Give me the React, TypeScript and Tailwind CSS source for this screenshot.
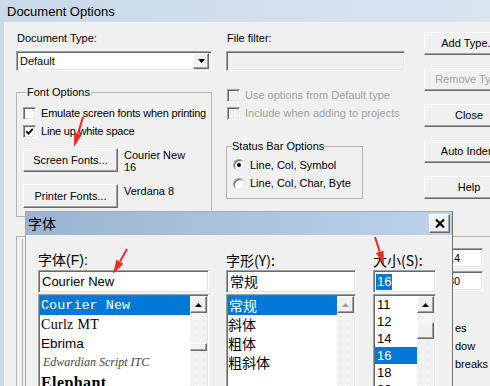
import React from "react";

const raised =
  "bg-[#f0f0f0] border border-t-white border-l-white border-r-[#696969] border-b-[#696969] shadow-[inset_-1px_-1px_0_#a0a0a0]";
const sunken =
  "border border-t-[#a0a0a0] border-l-[#a0a0a0] border-r-white border-b-white shadow-[inset_1px_1px_0_#696969,inset_-1px_-1px_0_#e3e3e3]";
const dither =
  "bg-[repeating-conic-gradient(#e9e9e9_0_25%,#ffffff_0_50%)] bg-[length:2px_2px]";

function Button({ label, disabled, className = "" }: { label: string; disabled?: boolean; className?: string }) {
  return (
    <div
      className={`${raised} h-[23px] flex items-center justify-center whitespace-nowrap ${
        disabled ? "text-[#a0a0a0]" : "text-black"
      } ${className}`}
    >
      {label}
    </div>
  );
}

function Check({ label, checked, disabled }: { label: string; checked?: boolean; disabled?: boolean }) {
  return (
    <div className="h-[18px] flex items-center gap-[5px] whitespace-nowrap">
      <span
        className={`${sunken} w-[13px] h-[13px] flex items-center justify-center ${
          disabled ? "bg-[#f0f0f0]" : "bg-white"
        }`}
      >
        {checked && (
          <svg width="9" height="9" viewBox="0 0 9 9">
            <path d="M1.2 4.2 L3.4 6.6 L7.8 1.8" fill="none" stroke="#000" strokeWidth="1.8" />
          </svg>
        )}
      </span>
      <span className={disabled ? "text-[#a0a0a0]" : "tracking-[-0.2px]"}>{label}</span>
    </div>
  );
}

function Radio({ label, on }: { label: string; on?: boolean }) {
  return (
    <div className="flex items-center gap-[5px] whitespace-nowrap">
      <span className="w-[12px] h-[12px] rounded-full bg-white border border-t-[#a0a0a0] border-l-[#a0a0a0] border-r-[#e3e3e3] border-b-[#e3e3e3] shadow-[inset_1px_1px_0_#696969] flex items-center justify-center">
        {on && <span className="w-[4px] h-[4px] rounded-full bg-black" />}
      </span>
      {label}
    </div>
  );
}

function ScrollBar({ thumbTop, thumbH, disabled }: { thumbTop?: number; thumbH?: number; disabled?: boolean }) {
  return (
    <div className="w-[17px] flex flex-col shrink-0">
      <div className={`${raised} h-[17px] flex items-center justify-center`}>
        <svg width="7" height="4" viewBox="0 0 7 4">
          <path d="M0 4 L3.5 0 L7 4 Z" fill={disabled ? "#a0a0a0" : "#000"} />
        </svg>
      </div>
      <div className={`flex-1 ${dither}`}>
        {thumbH ? <div className={`${raised}`} style={{ marginTop: thumbTop, height: thumbH }} /> : null}
      </div>
    </div>
  );
}

function Arrow({ x1, y1, x2, y2 }: { x1: number; y1: number; x2: number; y2: number }) {
  const dx = x2 - x1;
  const dy = y2 - y1;
  const len = Math.hypot(dx, dy);
  const ux = dx / len;
  const uy = dy / len;
  const bx = x2 - ux * 14;
  const by = y2 - uy * 14;
  const nx = -uy * 4;
  const ny = ux * 4;
  return (
    <g>
      <line x1={x1} y1={y1} x2={bx} y2={by} stroke="#ee2a24" strokeWidth="2" />
      <polygon points={`${x2},${y2} ${bx + nx},${by + ny} ${bx - nx},${by - ny}`} fill="#ee2a24" />
    </g>
  );
}

export default function App() {
  return (
    <div className="relative w-[490px] h-[386px] overflow-hidden bg-[#f0f0f0] text-black text-[11px] leading-[13px] font-['Liberation_Sans',Arial,sans-serif]">
      {/* back window */}
      <div className="h-[22px] bg-linear-to-r from-[#c9d9e9] to-[#d9e5f1] flex items-center pl-[7px] text-[13px]">
        Document Options
      </div>
      <div className="border-l-4 border-[#cddbea] h-[364px]">
        <div className="flex pt-[10px] pl-[12px]">
          {/* left column */}
          <div className="w-[196px] shrink-0 flex flex-col">
            <div className="pl-[1px]">Document Type:</div>
            <div className={`${sunken} bg-white mt-[6px] h-[20px] flex items-center justify-between pl-[3px] pr-[2px]`}>
              <span>Default</span>
              <div className={`${raised} w-[16px] h-[16px] flex items-center justify-center`}>
                <svg width="7" height="4" viewBox="0 0 7 4">
                  <path d="M0 0 L7 0 L3.5 4 Z" fill="#000" />
                </svg>
              </div>
            </div>
            <fieldset className="mt-[15px] border border-[#b4b4b4] pl-[6px] pb-[8px]">
              <legend className="ml-[3px] px-[1px]">Font Options</legend>
              <div className="pt-[5px]">
                <Check label="Emulate screen fonts when printing" />
                <Check label="Line up white space" checked />
              </div>
              <div className="flex mt-[8px] gap-[6px]">
                <Button label="Screen Fonts..." className="w-[95px] h-[24px]" />
                <div className="pt-[1px] leading-[12px]">
                  <div>Courier New</div>
                  <div>16</div>
                </div>
              </div>
              <div className="flex mt-[11px] gap-[6px]">
                <Button label="Printer Fonts..." className="w-[95px] h-[24px]" />
                <div className="pt-[1px] leading-[12px]">Verdana 8</div>
              </div>
            </fieldset>
          </div>

          {/* middle column */}
          <div className="ml-[14px] w-[179px] shrink-0 flex flex-col">
            <div className="pl-[1px]">File filter:</div>
            <div className={`${sunken} bg-[#f0f0f0] mt-[6px] h-[20px]`} />
            <div className="mt-[15px] pl-[1px]">
              <Check label="Use options from Default type" disabled />
              <Check label="Include when adding to projects" disabled />
            </div>
            <fieldset className="mt-[18px] w-[137px] border border-[#b4b4b4] pl-[6px] pb-[5px]">
              <legend className="-ml-[1px] px-0">Status Bar Options</legend>
              <div className="pt-[3px]">
                <div className="h-[18px] flex items-center">
                  <Radio label="Line, Col, Symbol" on />
                </div>
                <div className="h-[19px] flex items-center">
                  <Radio label="Line, Col, Char, Byte" />
                </div>
              </div>
            </fieldset>
          </div>

          {/* right column */}
          <div className="ml-[19px] w-[90px] shrink-0 flex flex-col gap-[13px]">
            <Button label="Add Type..." />
            <Button label="Remove Type" disabled />
            <Button label="Close" />
            <Button label="Auto Indent" />
            <Button label="Help" />
          </div>
        </div>

        {/* lower group, mostly covered */}
        <div className="ml-[12px] mt-[19px] h-[160px] border-t border-l border-[#b4b4b4] flex justify-between">
          <div className="ml-[5px] mt-[2px] h-[150px] border-l border-[#b4b4b4]" />
          <div className="w-[45px] pt-[11px] flex flex-col">
            <div className={`${sunken} bg-white w-[38px] h-[20px] flex items-center pl-[2px]`}>14</div>
            <div className={`${sunken} bg-white w-[38px] h-[20px] mt-[3px] flex items-center pl-[2px]`}>80</div>
            <div className="mt-[28px] pl-[10px] whitespace-nowrap">
              <div className="h-[18px] flex items-center">es</div>
              <div className="h-[18px] flex items-center">dow</div>
              <div className="h-[18px] flex items-center">breaks</div>
            </div>
          </div>
        </div>
      </div>

      {/* font dialog */}
      <div className="absolute left-[25px] top-[211px] w-[428px] h-[180px] bg-[#f0f0f0] border border-[#a8a8a8] border-r-[#6e6e6e] font-['Liberation_Sans','Noto_Sans_CJK_SC',sans-serif]">
        <div className="h-[23px] bg-linear-to-r from-[#99b4d1] to-[#bcd3ea] flex items-center justify-between pl-[2px] pr-[2px]">
          <span className="text-[14px] leading-[23px] font-['Noto_Sans_CJK_SC',sans-serif]">字体</span>
          <div className={`${raised} w-[21px] h-[19px] flex items-center justify-center`}>
            <svg width="10" height="9" viewBox="0 0 10 9">
              <path d="M1 0.5 L9 8.5 M9 0.5 L1 8.5" stroke="#000" strokeWidth="2.2" />
            </svg>
          </div>
        </div>
        <div className="flex gap-[17px] pl-[12px] pt-[15px] text-[14px]">
          {/* font */}
          <div className="w-[171px] shrink-0 flex flex-col">
            <div className="h-[20px] leading-[20px]">字体(F):</div>
            <div className={`${sunken} bg-white h-[23px] flex items-center px-[3px] text-[13px]`}>Courier New</div>
            <div className={`${sunken} bg-white mt-[1px] h-[110px] p-[1px] flex`}>
              <div className="flex-1 min-w-0 flex flex-col whitespace-nowrap overflow-hidden">
                <div className="h-[19px] shrink-0 bg-[#0078d7] text-white pl-[1px] leading-[19px] text-[13.5px] font-['Liberation_Mono','Courier_New',monospace]">
                  Courier New
                </div>
                <div className="h-[19px] shrink-0 pl-[1px] leading-[19px] text-[14px] font-['Liberation_Serif',serif] tracking-[0.3px]">
                  Curlz MT
                </div>
                <div className="h-[19px] shrink-0 pl-[1px] leading-[19px] text-[13.5px]">Ebrima</div>
                <div className="h-[19px] shrink-0 pl-[3px] leading-[19px] text-[12px] italic text-[#444] font-['Liberation_Serif',serif]">
                  Edwardian Script ITC
                </div>
                <div className="h-[19px] shrink-0 pl-[1px] leading-[21px] text-[16px] font-bold font-['Liberation_Serif',serif] tracking-[0.4px]">
                  Elephant
                </div>
              </div>
              <ScrollBar thumbTop={30} thumbH={8} />
            </div>
          </div>

          {/* style */}
          <div className="w-[130px] shrink-0 flex flex-col font-['Noto_Sans_CJK_SC',sans-serif]">
            <div className="h-[20px] leading-[20px]">字形(Y):</div>
            <div className={`${sunken} bg-white h-[23px] flex items-center px-[3px]`}>常规</div>
            <div className={`${sunken} bg-white mt-[1px] h-[110px] p-[1px] flex`}>
              <div className="flex-1 min-w-0 flex flex-col whitespace-nowrap">
                <div className="h-[19px] bg-[#0078d7] text-white pl-[1px] leading-[19px]">常规</div>
                <div className="h-[19px] leading-[19px]">斜体</div>
                <div className="h-[19px] leading-[19px]">粗体</div>
                <div className="h-[19px] leading-[19px]">粗斜体</div>
              </div>
              <ScrollBar disabled />
            </div>
          </div>

          {/* size */}
          <div className="w-[63px] shrink-0 flex flex-col">
            <div className="h-[20px] leading-[20px] font-['Noto_Sans_CJK_SC',sans-serif]">大小(S):</div>
            <div className={`${sunken} bg-white h-[23px] flex items-center px-[2px] text-[13px]`}>
              <span className="bg-[#0078d7] text-white px-[1px] leading-[16px]">16</span>
            </div>
            <div className={`${sunken} bg-white mt-[1px] h-[110px] p-[1px] flex text-[13px]`}>
              <div className="flex-1 min-w-0 flex flex-col">
                <div className="h-[17px] shrink-0 pl-[2px] leading-[17px]">11</div>
                <div className="h-[17px] shrink-0 pl-[2px] leading-[17px]">12</div>
                <div className="h-[17px] shrink-0 pl-[2px] leading-[17px]">14</div>
                <div className="h-[17px] shrink-0 pl-[2px] leading-[17px] bg-[#0078d7] text-white">16</div>
                <div className="h-[17px] shrink-0 pl-[2px] leading-[17px]">18</div>
                <div className="h-[17px] shrink-0 pl-[2px] leading-[17px]">20</div>
              </div>
              <ScrollBar thumbTop={9} thumbH={17} />
            </div>
          </div>
        </div>
      </div>

      {/* annotation arrows */}
      <svg className="absolute left-0 top-0 pointer-events-none" width="490" height="386">
        <Arrow x1={83} y1={117} x2={74} y2={147} />
        <Arrow x1={127} y1={249} x2={113} y2={274} />
        <Arrow x1={375} y1={237} x2={384} y2={265} />
      </svg>
    </div>
  );
}
